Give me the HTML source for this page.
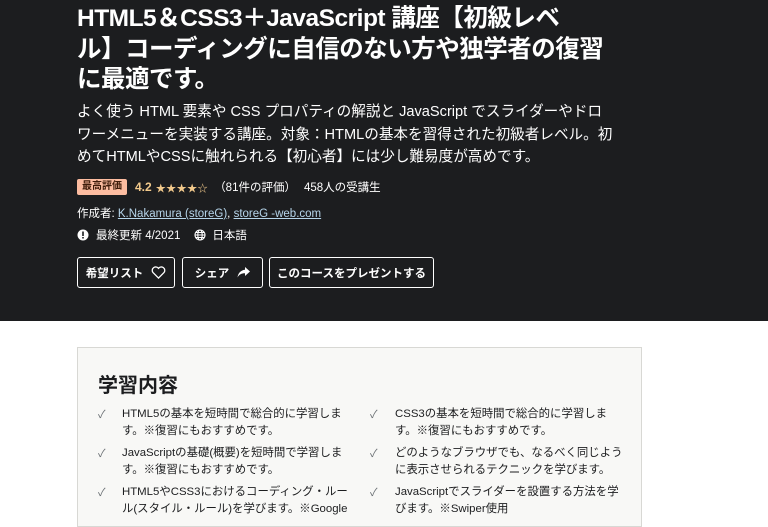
<!DOCTYPE html>
<html><head><meta charset="utf-8"><style>
*{margin:0;padding:0;box-sizing:border-box}
body{width:768px;height:516px;overflow:hidden;background:#fff;font-family:"Liberation Sans","Noto Sans CJK JP",sans-serif;}
.top{position:absolute;left:0;top:0;width:768px;height:321px;background:#1c1d1f;color:#fff}
h1{position:absolute;left:77px;top:4px;width:640px;white-space:nowrap;font-size:24.5px;line-height:30.5px;font-weight:700;letter-spacing:-0.5px}
.sub{position:absolute;left:77px;top:101px;width:640px;white-space:nowrap;font-size:14.6px;line-height:22.5px}
.row1{position:absolute;left:77px;top:179px;font-size:11.5px;display:flex;align-items:center;height:16px}
.badge{background:#fcbca0;color:#3d1c0a;padding:0 5px;height:16px;line-height:16px;border-radius:2px;font-weight:700;font-size:10px}
.rate{color:#f3ca8c;font-weight:700;margin-left:8px;font-size:12px}
.stars{color:#f3ca8c;margin-left:4px;font-size:10px;letter-spacing:0.5px}
.row2{position:absolute;left:77px;top:205px;font-size:11.5px}
.row2 a{color:#b6d5ea;text-decoration:underline}
.row3{position:absolute;left:77px;top:227px;font-size:11.5px;display:flex;align-items:center}
.btn{position:absolute;top:257px;height:31px;border:1px solid #fff;border-radius:3px;font-size:11.5px;font-weight:700;display:flex;align-items:center;justify-content:center;gap:8px}
.box{position:absolute;left:77px;top:347px;width:565px;height:180px;background:#f8f8f6;border:1px solid #d8d8d4}
.box h2{position:absolute;left:20px;top:21px;font-size:20px;font-weight:700;color:#1c1d1f}
.it{position:absolute;font-size:11.4px;line-height:17px;color:#1c1d1f;white-space:nowrap}
.ck{position:absolute;font-size:11px;color:#6a6f73}
</style></head><body>
<div class="top">
<h1>HTML5＆CSS3＋JavaScript 講座【初級レベ<br>ル】コーディングに自信のない方や独学者の復習<br>に最適です。</h1>
<div class="sub">よく使う HTML 要素や CSS プロパティの解説と JavaScript でスライダーやドロ<br>ワーメニューを実装する講座。対象：HTMLの基本を習得された初級者レベル。初<br>めてHTMLやCSSに触れられる【初心者】には少し難易度が高めです。</div>
<div class="row1"><span class="badge">最高評価</span><span class="rate">4.2</span><span class="stars">★★★★☆</span><span style="margin-left:6px">（81件の評価）</span><span style="margin-left:8px">458人の受講生</span></div>
<div class="row2">作成者: <a>K.Nakamura (storeG)</a>, <a>storeG -web.com</a></div>
<div class="row3"><svg width="12" height="12" viewBox="0 0 12 12"><circle cx="6" cy="6" r="5.5" fill="#fff"/><rect x="5.2" y="2.5" width="1.6" height="4.5" fill="#1c1d1f"/><rect x="5.2" y="8" width="1.6" height="1.5" fill="#1c1d1f"/></svg><span style="margin-left:7px">最終更新 4/2021</span>
<svg style="margin-left:14px" width="12" height="12" viewBox="0 0 12 12" fill="none" stroke="#fff" stroke-width="1.1"><circle cx="6" cy="6" r="5"/><ellipse cx="6" cy="6" rx="2.2" ry="5"/><path d="M1 6h10M2 3.5h8M2 8.5h8"/></svg><span style="margin-left:6px">日本語</span></div>
<div class="btn" style="left:77px;width:98px">希望リスト <svg width="15" height="13" viewBox="0 0 16 14" fill="none" stroke="#fff" stroke-width="1.4"><path d="M8 13L2 7A3.3 3.3 0 0 1 8 2.5 3.3 3.3 0 0 1 14 7Z"/></svg></div>
<div class="btn" style="left:182px;width:81px">シェア <svg width="13" height="11" viewBox="0 0 13 11"><path d="M8 0l5 4.5L8 9V6.3C4.5 6.3 2.2 7.5 0.5 10.5 1 6.5 3.5 3.3 8 2.8Z" fill="#fff"/></svg></div>
<div class="btn" style="left:269px;width:165px">このコースをプレゼントする</div>
</div>
<div class="box">
<h2>学習内容</h2>
<span class="ck" style="left:20px;top:58px">✓</span><div class="it" style="left:44px;top:58px">HTML5の基本を短時間で総合的に学習しま<br>す。※復習にもおすすめです。</div>
<span class="ck" style="left:292px;top:58px">✓</span><div class="it" style="left:317px;top:58px">CSS3の基本を短時間で総合的に学習しま<br>す。※復習にもおすすめです。</div>
<span class="ck" style="left:20px;top:97px">✓</span><div class="it" style="left:44px;top:97px">JavaScriptの基礎(概要)を短時間で学習しま<br>す。※復習にもおすすめです。</div>
<span class="ck" style="left:292px;top:97px">✓</span><div class="it" style="left:317px;top:97px">どのようなブラウザでも、なるべく同じよう<br>に表示させられるテクニックを学びます。</div>
<span class="ck" style="left:20px;top:136px">✓</span><div class="it" style="left:44px;top:136px">HTML5やCSS3におけるコーディング・ルー<br>ル(スタイル・ルール)を学びます。※Google</div>
<span class="ck" style="left:292px;top:136px">✓</span><div class="it" style="left:317px;top:136px">JavaScriptでスライダーを設置する方法を学<br>びます。※Swiper使用</div>
</div>
</body></html>
